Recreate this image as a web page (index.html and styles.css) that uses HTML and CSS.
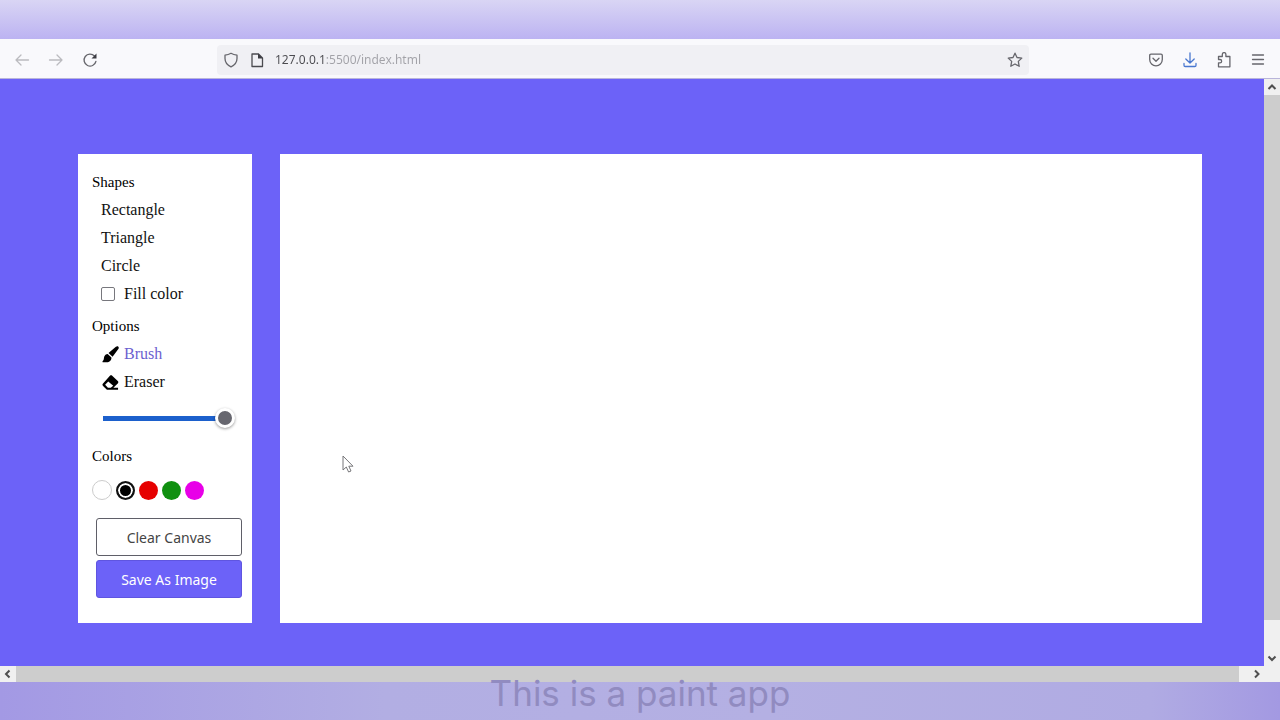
FILE: index.html
```html
<!DOCTYPE html>
<html lang="en">
<head>
    <meta charset="UTF-8">
    <meta name="viewport" content="width=device-width, initial-scale=1.0">
    <title>Paint App</title>
    <link rel="stylesheet" href="styles.css">
</head>
<body>
    <div class="band-top"></div>

    <!-- Browser toolbar -->
    <header class="toolbar">
        <button class="tool-btn disabled" aria-label="Back">
            <svg viewBox="0 0 16 16"><path d="M14.5 8H2M7 3L2 8l5 5"/></svg>
        </button>
        <button class="tool-btn disabled" aria-label="Forward">
            <svg viewBox="0 0 16 16"><path d="M1.500 8H14M9 3l5 5-5 5"/></svg>
        </button>
        <button class="tool-btn" aria-label="Reload">
            <svg viewBox="0 0 16 16"><path d="M13.900 9.500A6 6 0 1 1 12.500 4"/><path class="solid" d="M14.500 1.500v5h-5z"/></svg>
        </button>
        <div class="urlbar">
            <svg viewBox="0 0 16 16"><path d="M8 1.300c2 1.200 4 1.700 6 1.900v3.300c0 4-2.500 6.700-6 8.300-3.500-1.600-6-4.300-6-8.300V3.200c2-.2 4-.7 6-1.900z"/></svg>
            <svg viewBox="0 0 16 16"><path class="dark" d="M3 2h6.500L13.500 6v8.500H3z"/><path class="solid" d="M9 1.500L14 6.500H9z"/></svg>
            <input type="text" class="url" aria-label="Address" value="127.0.0.1:5500/index.html">
            <button class="star" aria-label="Bookmark this page">
                <svg viewBox="0 0 16 16"><path d="M8 1.200l2 4.300 4.800.6-3.500 3.300.9 4.900L8 12l-4.200 2.300.9-4.900L1.200 6.100 6 5.500z"/></svg>
            </button>
        </div>
        <button class="tool-btn" aria-label="Pocket">
            <svg viewBox="0 0 16 16"><path d="M3 2.200h10c.8 0 1.300.5 1.300 1.300V7.500a6.300 6.300 0 0 1-12.600 0V3.500c0-.8.5-1.300 1.300-1.300zM5 6.300l3 2.900 3-2.900"/></svg>
        </button>
        <button class="tool-btn download" aria-label="Downloads">
            <svg viewBox="0 0 16 16"><path d="M8 .8v10M3.800 7L8 11l4.200-4M2 11.500v1.800c0 .7.400 1.200 1.200 1.200h9.600c.8 0 1.200-.5 1.200-1.200v-1.800"/></svg>
        </button>
        <button class="tool-btn" aria-label="Extensions">
            <svg viewBox="0 0 16 16"><path d="M2.500 14.800v-4H4a1.600 1.600 0 0 0 0-3.300H2.500V4.500h3.800V2.400a1.800 1.800 0 0 1 3.600 0V4.500h4v10.300z"/></svg>
        </button>
        <button class="tool-btn" aria-label="Menu">
            <svg viewBox="0 0 16 16"><path d="M2.500 3h11M2.500 7.500h11M2.500 12h11"/></svg>
        </button>
    </header>

    <div class="viewport">
        <main class="container">
            <aside class="tools">
                <section>
                    <h2 class="title">Shapes</h2>
                    <ul class="options">
                        <li><button class="option">Rectangle</button></li>
                        <li><button class="option">Triangle</button></li>
                        <li><button class="option">Circle</button></li>
                        <li class="option">
                            <input type="checkbox" id="fill-color">
                            <label for="fill-color">Fill color</label>
                        </li>
                    </ul>
                </section>

                <section>
                    <h2 class="title">Options</h2>
                    <ul class="options">
                        <li>
                            <button class="option active">
                                <svg viewBox="0 0 18 18"><path d="M17.300.7c.7.700.5 1.700 0 2.500l-6.100 8.300-4.300-4L14.700.9c.8-.6 1.900-.9 2.600-.2zM6 8.500l4 3.800c.2 3.200-2.200 5-5 5H1.200c-.8 0-1-.9-.4-1.400 1.600-1.200.9-2.500 1.500-4.400.6-1.900 1.900-3 3.700-3z"/></svg>
                                Brush
                            </button>
                        </li>
                        <li>
                            <button class="option">
                                <svg viewBox="0 0 18 18"><path fill-rule="evenodd" d="M10.800 1.900l5.900 5.600c.8.800.8 1.700 0 2.500L12 14.600h5v2H5.200L1.100 12.600c-.8-.8-.8-1.800 0-2.600l7.300-8.100c.7-.7 1.700-.7 2.400 0zM6.600 7.900l-3.300 3.500 3 3.200h3l2.600-2.200z"/></svg>
                                Eraser
                            </button>
                        </li>
                    </ul>
                    <input type="range" class="size-slider" min="1" max="30" value="30" aria-label="Brush size">
                </section>

                <section>
                    <h2 class="title">Colors</h2>
                    <div class="colors">
                        <input type="radio" name="color" class="color white" aria-label="White">
                        <input type="radio" name="color" class="color black" aria-label="Black" checked>
                        <input type="radio" name="color" class="color red" aria-label="Red">
                        <input type="radio" name="color" class="color green" aria-label="Green">
                        <input type="radio" name="color" class="color pink" aria-label="Pink">
                    </div>
                </section>

                <div class="buttons">
                    <button class="clear-canvas">Clear Canvas</button>
                    <button class="save-img">Save As Image</button>
                </div>
            </aside>

            <section class="drawing-board">
                <canvas></canvas>
                <svg class="cursor" viewBox="0 0 12 18"><path d="M1 1v14l3.300-3 2.300 5 2.400-1-2.200-4.800H11z"/></svg>
            </section>
        </main>

        <!-- Scrollbars -->
        <div class="scroll-y">
            <button class="scroll-btn" aria-label="Scroll up"><svg viewBox="0 0 16 16"><path d="M4.500 10L8 6.500l3.500 3.500"/></svg></button>
            <div class="thumb"></div>
            <button class="scroll-btn" aria-label="Scroll down"><svg viewBox="0 0 16 16"><path d="M4.500 6.500L8 10l3.500-3.500"/></svg></button>
        </div>
        <div class="scroll-x">
            <button class="scroll-btn" aria-label="Scroll left"><svg viewBox="0 0 16 16"><path d="M9.500 4.500L6 8l3.500 3.500"/></svg></button>
            <div class="thumb"></div>
            <button class="scroll-btn" aria-label="Scroll right"><svg viewBox="0 0 16 16"><path d="M7 4.500L10.500 8 7 11.500"/></svg></button>
        </div>
        <div class="scroll-corner"></div>
    </div>

    <footer class="band-bottom">
        <p class="caption">This is a paint app</p>
    </footer>
</body>
</html>
```
FILE: styles.css
```css
* {
    margin: 0;
    padding: 0;
    box-sizing: border-box;
}

body {
    display: flex;
    flex-direction: column;
    min-height: 100vh;
    font-family: "Liberation Serif", serif;
    background: #b2ade2;
}

button {
    border: none;
    background: none;
    font-family: inherit;
    cursor: pointer;
}

svg {
    display: block;
    flex: none;
}

.band-top {
    height: 39px;
    background: linear-gradient(#d9d5f4, #bcb3f2);
}

/* Browser toolbar */
.toolbar {
    display: flex;
    align-items: center;
    height: 40px;
    padding: 2px 5px 0;
    background: #f9f9fc;
    border-bottom: 1px solid #b9b5da;
}

.toolbar svg {
    width: 16px;
    height: 16px;
    fill: none;
    stroke: #66666c;
    stroke-width: 1.3;
    stroke-linejoin: round;
    stroke-linecap: round;
}

.toolbar .solid {
    fill: #3c3c42;
    stroke: none;
}

.toolbar .dark {
    stroke: #4b4b50;
}

.tool-btn {
    display: flex;
    align-items: center;
    justify-content: center;
    width: 34px;
    height: 32px;
}

.toolbar .disabled svg {
    stroke: #bbbbbf;
}

.toolbar .download svg {
    stroke: #4a78d0;
}

.urlbar {
    display: flex;
    flex: 1;
    align-items: center;
    gap: 10px;
    height: 30px;
    margin: 0 110px;
    padding: 0 6px;
    background: #f0f0f4;
    border-radius: 4px;
}

/* host part is darker than the rest of the address */
.url {
    flex: 1;
    min-width: 0;
    height: 20px;
    border: none;
    outline: none;
    font-family: "Noto Sans", sans-serif;
    font-size: 12px;
    color: transparent;
    background: linear-gradient(90deg, #4b4b50 51px, #a2a2a8 51px);
    -webkit-background-clip: text;
    background-clip: text;
}

/* Page area with scrollbars */
.viewport {
    display: grid;
    flex: 1;
    grid-template-columns: 1fr 16px;
    grid-template-rows: 1fr 16px;
}

.container {
    display: flex;
    gap: 28px;
    padding: 75px 62px 43px 78px;
    background: #6c62f8;
}

.tools {
    width: 174px;
    padding: 15px 10px 25px 14px;
    background: #fff;
}

.title {
    margin-bottom: 1px;
    font-size: 15px;
    font-weight: normal;
    line-height: 26px;
}

.options {
    list-style: none;
    margin-bottom: 5px;
}

.option {
    display: flex;
    align-items: center;
    gap: 5px;
    height: 28px;
    padding-left: 9px;
    font-size: 16px;
    color: #111;
}

.option.active {
    color: #6c5fd0;
}

.option svg {
    width: 17px;
    height: 17px;
    margin-left: 1px;
    fill: #000;
}

.option input {
    appearance: none;
    width: 14px;
    height: 14px;
    margin-right: 4px;
    border: 1px solid #77777d;
    border-radius: 2px;
}

.size-slider {
    appearance: none;
    display: block;
    width: 132px;
    height: 20px;
    margin: 12px 0 15px 11px;
    background: linear-gradient(#1c60cc, #1c60cc) left center / 120px 5px no-repeat;
}

.size-slider::-webkit-slider-thumb {
    appearance: none;
    width: 20px;
    height: 20px;
    background: #67676f;
    border: 3px solid #fff;
    border-radius: 50%;
    box-shadow: 0 1px 3px rgba(0, 0, 0, 0.4);
}

.colors {
    display: flex;
    align-items: center;
    gap: 4px;
    margin: 11px 0 18px;
}

.color {
    appearance: none;
    width: 19px;
    height: 19px;
    border-radius: 50%;
}

.white {
    width: 20px;
    height: 20px;
    border: 1px solid #ccc;
}

.black {
    background: #000;
    border: 2px solid #111;
    box-shadow: inset 0 0 0 2px #fff;
}

.red {
    background: #e60000;
}

.green {
    background: #109010;
}

.pink {
    background: #e800e8;
}

.buttons {
    display: flex;
    flex-direction: column;
    gap: 4px;
    padding-left: 4px;
}

.buttons button {
    height: 38px;
    border: 1px solid #5f5f68;
    border-radius: 3px;
    font-family: "Noto Sans", sans-serif;
    font-size: 14px;
    color: #444;
}

.buttons .save-img {
    background: #6c62f8;
    border-color: #5f55e0;
    color: #fff;
}

.drawing-board {
    position: relative;
    flex: 1;
    background: #fff;
}

.drawing-board canvas {
    display: block;
    width: 100%;
    height: 100%;
}

/* mouse pointer over the canvas */
.cursor {
    position: absolute;
    top: 301px;
    left: 62px;
    width: 12px;
    height: 18px;
    fill: #fff;
    stroke: #77777a;
}

.scroll-y,
.scroll-x {
    display: flex;
    background: #f0f0f0;
}

.scroll-y {
    flex-direction: column;
    justify-content: space-between;
}

.thumb {
    background: #cdcdcd;
}

.scroll-y .thumb {
    flex: 1;
    margin-bottom: 30px;
}

.scroll-x .thumb {
    flex: 1;
    margin-right: 9px;
}

.scroll-btn,
.scroll-btn svg {
    width: 16px;
    height: 16px;
}

.scroll-btn svg {
    fill: none;
    stroke: #505050;
    stroke-width: 2;
}

.scroll-corner {
    background: #f0f0f0;
}

.band-bottom {
    position: relative;
    height: 38px;
    background: linear-gradient(90deg, #a399e4, #b2aee3 30%, #b4b0e3 60%, #b0abe3 90%, #a399e2);
}

/* caption reaches over the lower scrollbar */
.caption {
    position: absolute;
    top: -11px;
    left: 0;
    width: 100%;
    text-align: center;
    font-family: Inter, sans-serif;
    font-size: 35px;
    line-height: 44px;
    color: #918bc0;
}
```
